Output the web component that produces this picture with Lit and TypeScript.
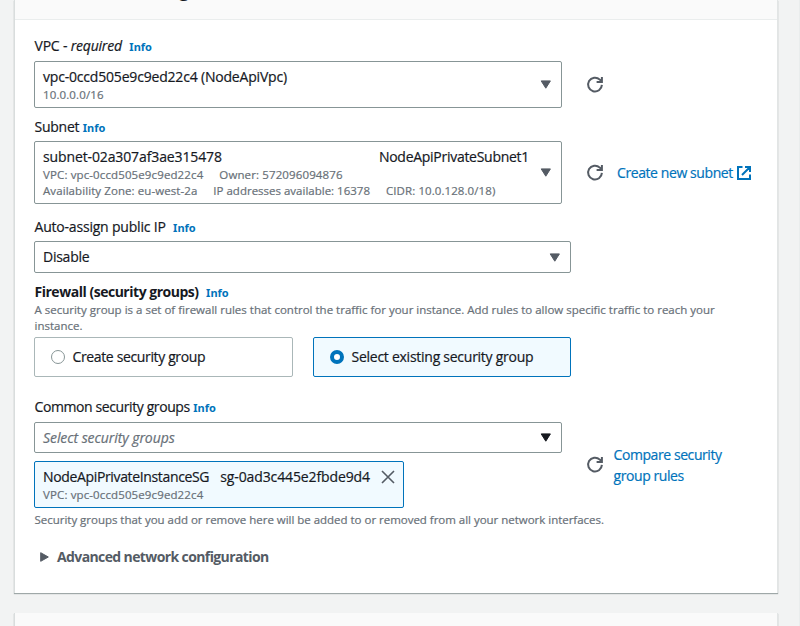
import { LitElement, html, css } from "lit";
import { customElement } from "lit/decorators.js";

const refreshIcon = html`<svg class="refresh" width="18" height="18" viewBox="0 0 18 18">
  <path d="M15.9 8.9A6.9 6.9 0 1 1 13.8 3.6L16 5.8M10.6 5.9H15.9V1" fill="none" stroke="#545b64" stroke-width="2"/>
</svg>`;

const externalIcon = html`<svg class="external" width="14" height="14" viewBox="0 0 14 14">
  <path d="M5.5 1H1V13H13V8.5M8 1H13V6M13 1L5 9" fill="none" stroke="#0073bb" stroke-width="2"/>
</svg>`;

const caret = html`<svg class="caret" width="11" height="9" viewBox="0 0 11 9">
  <path d="M1.2 .9H10.4L5.8 8.2Z" fill="currentColor" stroke="currentColor" stroke-width="1" stroke-linejoin="round"/>
</svg>`;

@customElement("app-root")
export class AppRoot extends LitElement {
  static styles = css`
    :host {
      display: block;
      height: 626px;
      overflow: hidden;
      background: #f2f3f3;
      font-family: "Open Sans", "Noto Sans", sans-serif;
      font-size: 14px;
      line-height: 20px;
      color: #16191f;
      -webkit-text-stroke: .2px currentColor;
      white-space: nowrap;
      box-sizing: border-box;
      padding-left: 14px;
      border-right: 1px solid #eaeded;
    }
    * { box-sizing: border-box; }
    .card {
      width: 764px;
      height: 593px;
      background: #fff;
      border-left: 1px solid #d9dddd;
      border-right: 1px solid #e2e5e5;
      box-shadow: 0 1px 1px #9fa8a8;
    }
    .next { margin-top: 20px; height: 30px; background: #fafafa; }
    .head {
      height: 20px;
      background: #fafafa;
      border-bottom: 1px solid #eaeded;
      padding-left: 20px;
      display: flex;
      align-items: flex-start;
    }
    .head h2 { margin: -21px 0 0; font-size: 18px; line-height: 22px; font-weight: 700; letter-spacing: .55px; }
    .body { padding: 16px 18px 0 19px; display: flex; flex-direction: column; align-items: flex-start; }
    .label { height: 20px; padding-left: .5px; display: flex; align-items: center; }
    .info { font: 700 11px/20px "Noto Sans", sans-serif; color: #0073bb; padding-top: 1px; -webkit-text-stroke: 0; }
    .wide { margin-left: 7.5px; }
    .near { margin-left: 3.5px; }
    .row { display: flex; align-items: center; }
    .select {
      width: 528px;
      border: 1px solid #879596;
      border-radius: 2px;
      padding: 0 10px 0 8px;
      display: flex;
      align-items: center;
      justify-content: space-between;
    }
    .caret { color: #545b64; flex: none; }
    .top4 { margin-top: 4px; }
    .top5 { margin-top: 5px; }
    .h47 { height: 47px; }
    .h63 { height: 63px; }
    .h32 { width: 537px; height: 32px; }
    .h31 { height: 31px; }
    .dark .caret { color: #16191f; }
    .small { font-size: 11.5px; line-height: 16px; color: #687078; -webkit-text-stroke-width: .2px; }
    .main { line-height: 20px; }
    .split { display: flex; justify-content: space-between; width: 486px; }
    .metas { display: flex; gap: 16px; }
    .meta { letter-spacing: .12px; }
    .zone { letter-spacing: .08px; }
    .zone .ips { letter-spacing: 0; }
    .refresh { display: block; margin-left: 24px; flex: none; }
    .link { color: #0073bb; display: flex; align-items: center; gap: 4px; margin-left: 13px; }
    .top9 { margin-top: 9px; }
    .top13 { margin-top: 13px; }
    .top20 { margin-top: 20px; }
    .desc { white-space: normal; width: 695px; padding-left: .5px; }
    .tiles { display: flex; gap: 20px; margin-top: 3px; }
    .tile {
      width: 259px;
      height: 40px;
      border: 1px solid #aab7b8;
      border-radius: 2px;
      padding-left: 16px;
      display: flex;
      align-items: center;
      gap: 7.5px;
    }
    .picked { width: 258px; border-color: #0073bb; background: #f1faff; }
    .dot { width: 14px; height: 14px; border: 1px solid #879596; border-radius: 50%; background: #fff; }
    .picked .dot { border: 4px solid #0073bb; }
    .stack { display: flex; flex-direction: column; gap: 8px; }
    .token {
      width: 370px;
      height: 47px;
      border: 1px solid #0073bb;
      border-radius: 2px;
      background: #f1faff;
      padding: 5px 8px 0 8px;
    }
    .names { display: flex; justify-content: space-between; align-items: center; height: 20px; }
    .close { display: block; }
    .ph { font-style: italic; color: #687078; letter-spacing: -.07px; }
    .compare { display: block; line-height: 21.5px; margin-left: 9.5px; }
    .help { margin-top: 4px; padding-left: .5px; letter-spacing: -.02px; }
    .adv { display: flex; align-items: center; gap: 8.5px; margin: 19px 0 0 5.5px; font-weight: 700; color: #545b64; }
    b, h2, .adv { -webkit-text-stroke: 0; }
    .t0 { letter-spacing: -.2px; }
    .t1 { letter-spacing: -.19px; }
    .t2 { letter-spacing: -.25px; }
    .t3 { letter-spacing: -.12px; }
    .t4 { letter-spacing: -.28px; }
    .t5 { letter-spacing: -.41px; }
    .t6 { letter-spacing: -.2px; }
    .t7 { letter-spacing: -.48px; }
    .t8 { letter-spacing: -.36px; }
    .t9 { letter-spacing: -.26px; }
    .t10 { letter-spacing: -.4px; }
    .t11 { letter-spacing: -.35px; }
    .t12 { letter-spacing: -.12px; }
    .t13 { letter-spacing: -.42px; }
    .t15 { letter-spacing: -.61px; }
  `;

  render() {
    return html`
      <section class="card">
        <div class="head"><h2>Network settings</h2></div>
        <div class="body">
          <div class="label"><span class="t0">VPC - <i>required</i></span><span class="info wide">Info</span></div>
          <div class="row top5">
            <div class="select h47">
              <div><div class="main t1">vpc-0ccd505e9c9ed22c4 (NodeApiVpc)</div><div class="small meta">10.0.0.0/16</div></div>
              ${caret}
            </div>
            ${refreshIcon}
          </div>
          <div class="label top9"><span class="t2">Subnet</span><span class="info near">Info</span></div>
          <div class="row top4">
            <div class="select h63">
              <div>
                <div class="main split"><span class="t3">subnet-02a307af3ae315478</span><span class="t4">NodeApiPrivateSubnet1</span></div>
                <div class="small meta metas"><span>VPC: vpc-0ccd505e9c9ed22c4</span><span>Owner: 572096094876</span></div>
                <div class="small zone metas"><span>Availability Zone: eu-west-2a</span><span class="ips">IP addresses available: 16378</span><span>CIDR: 10.0.128.0/18)</span></div>
              </div>
              ${caret}
            </div>
            ${refreshIcon}
            <a class="link"><span class="t5">Create new subnet</span>${externalIcon}</a>
          </div>
          <div class="label top13"><span class="t6">Auto-assign public IP</span><span class="info wide">Info</span></div>
          <div class="select h32 top4"><span class="t2">Disable</span>${caret}</div>
          <div class="label top9"><b class="t7">Firewall (security groups)</b><span class="info wide">Info</span></div>
          <div class="small desc">A security group is a set of firewall rules that control the traffic for your instance. Add rules to allow specific traffic to reach your instance.</div>
          <div class="tiles">
            <div class="tile"><span class="dot"></span><span class="t8">Create security group</span></div>
            <div class="tile picked"><span class="dot"></span><span class="t9">Select existing security group</span></div>
          </div>
          <div class="label top20"><span class="t10">Common security groups</span><span class="info near">Info</span></div>
          <div class="row top5">
            <div class="stack">
              <div class="select h31 dark"><span class="ph">Select security groups</span>${caret}</div>
              <div class="token">
                <div class="names">
                  <span class="t11">NodeApiPrivateInstanceSG</span><span class="t12">sg-0ad3c445e2fbde9d4</span>
                  <svg class="close" width="14" height="14" viewBox="0 0 14 14"><path d="M1 1L13 13M13 1L1 13" stroke="#545b64" stroke-width="1.6"/></svg>
                </div>
                <div class="small meta">VPC: vpc-0ccd505e9c9ed22c4</div>
              </div>
            </div>
            ${refreshIcon}
            <a class="link compare"><span class="t13">Compare security</span><br /><span class="t13">group rules</span></a>
          </div>
          <div class="small help">Security groups that you add or remove here will be added to or removed from all your network interfaces.</div>
          <div class="adv"><svg width="9" height="10" viewBox="0 0 9 10"><path d="M.7 .7V9.3L8.3 5Z" fill="#545b64" stroke="#545b64" stroke-linejoin="round"/></svg><span class="t15">Advanced network configuration</span></div>
        </div>
      </section>
      <section class="card next"></section>
    `;
  }
}
